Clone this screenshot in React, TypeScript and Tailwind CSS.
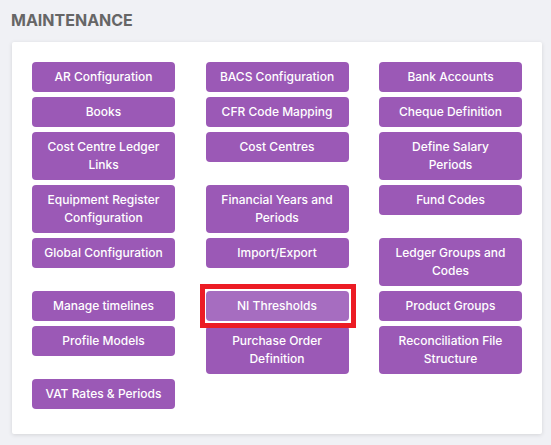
import React from "react";

const items: string[] = [
  "AR Configuration",
  "BACS Configuration",
  "Bank Accounts",
  "Books",
  "CFR Code Mapping",
  "Cheque Definition",
  "Cost Centre Ledger Links",
  "Cost Centres",
  "Define Salary Periods",
  "Equipment Register Configuration",
  "Financial Years and Periods",
  "Fund Codes",
  "Global Configuration",
  "Import/Export",
  "Ledger Groups and Codes",
  "Manage timelines",
  "NI Thresholds",
  "Product Groups",
  "Profile Models",
  "Purchase Order Definition",
  "Reconciliation File Structure",
  "VAT Rates & Periods",
];

const HIGHLIGHTED = "NI Thresholds";

const MaintenanceButton = ({ label }: { label: string }) => {
  const active = label === HIGHLIGHTED;
  return (
    <div className="relative">
      <button
        className={
          active
            ? "w-full rounded-[4px] bg-[#a66dc0] px-[11px] py-[6px] text-center text-[12px] font-medium leading-[18px] text-white"
            : "w-full rounded-[4px] bg-[#9b59b6] px-[11px] py-[6px] text-center text-[12px] font-medium leading-[18px] text-white"
        }
      >
        {label}
      </button>
      {active && (
        <div className="pointer-events-none absolute -top-[7px] -left-[6px] -right-[7px] -bottom-[7px] z-10 border-[5px] border-[#ec1c24]" />
      )}
    </div>
  );
};

export default function App() {
  return (
    <div
      className="min-h-screen bg-[#f0f1f5] px-3 pt-[9px] pb-3"
      style={{ fontFamily: "Inter, 'Noto Sans', sans-serif" }}
    >
      <h2 className="-ml-px text-[16px] font-bold leading-[22px] text-[#666666]">
        MAINTENANCE
      </h2>
      <div className="mt-[11px] w-[530px] rounded-[2px] bg-white px-5 pt-5 pb-[25px] shadow-[0_1px_4px_rgba(0,0,0,0.12)]">
        <div className="grid grid-cols-[143px_143px_143px] items-start justify-between gap-y-[5px]">
          {items.map((label) => (
            <MaintenanceButton key={label} label={label} />
          ))}
        </div>
      </div>
    </div>
  );
}
